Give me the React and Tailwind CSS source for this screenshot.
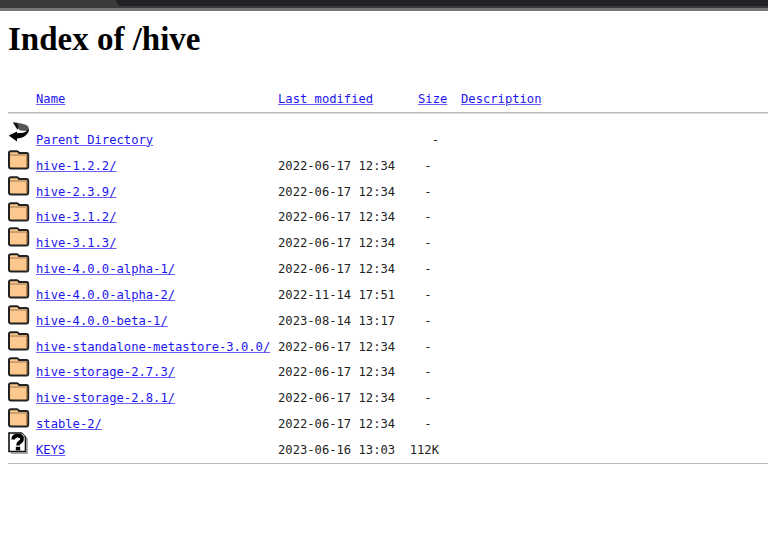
import React from "react";

const mono = "font-['DejaVu_Sans_Mono',monospace] text-[12.17px] leading-[14px]";
const linkCls = "text-[#1c14ee] underline decoration-[#6a60f4]";

const rows = [
  { name: "Parent Directory", date: "", size: "-", icon: "back" },
  { name: "hive-1.2.2/", date: "2022-06-17 12:34", size: "- ", icon: "folder" },
  { name: "hive-2.3.9/", date: "2022-06-17 12:34", size: "- ", icon: "folder" },
  { name: "hive-3.1.2/", date: "2022-06-17 12:34", size: "- ", icon: "folder" },
  { name: "hive-3.1.3/", date: "2022-06-17 12:34", size: "- ", icon: "folder" },
  { name: "hive-4.0.0-alpha-1/", date: "2022-06-17 12:34", size: "- ", icon: "folder" },
  { name: "hive-4.0.0-alpha-2/", date: "2022-11-14 17:51", size: "- ", icon: "folder" },
  { name: "hive-4.0.0-beta-1/", date: "2023-08-14 13:17", size: "- ", icon: "folder" },
  { name: "hive-standalone-metastore-3.0.0/", date: "2022-06-17 12:34", size: "- ", icon: "folder" },
  { name: "hive-storage-2.7.3/", date: "2022-06-17 12:34", size: "- ", icon: "folder" },
  { name: "hive-storage-2.8.1/", date: "2022-06-17 12:34", size: "- ", icon: "folder" },
  { name: "stable-2/", date: "2022-06-17 12:34", size: "- ", icon: "folder" },
  { name: "KEYS", date: "2023-06-16 13:03", size: "112K", icon: "unknown" },
];

const FolderIcon = () => (
  <svg width="22" height="24" viewBox="0 0 22 24" className="block">
    <path
      d="M1 6 V5 Q1 3.2 3 3.2 H9 Q10.5 3.2 11 5 H18.5 Q20.2 5 20.2 7 V18.5 Q20.2 20.4 18.5 20.4 H3 Q1 20.4 1 18.5 Z"
      fill="#fcc88e"
      stroke="#222"
      strokeWidth="2"
    />
    <path d="M2 7 H19" stroke="#9a7650" strokeWidth="1" />
    <path d="M18.7 7.5 V19" stroke="#b07c44" strokeWidth="1" />
  </svg>
);

const BackIcon = () => (
  <svg width="22" height="24" viewBox="0 0 22 24" className="block">
    <path d="M5 0.5 Q14 0.5 20 4 Q21.2 6 20.5 9 L12 8.5 Z" fill="#555" />
    <path d="M5 0.5 L9 1 L10.5 5 L9.5 8 Z" fill="#111" />
    <path
      d="M20.8 6 Q19 11 12 11 L9 11 V9.5 L0.7 13.5 L9 19.5 V16.5 Q17 16 20.5 10 Z"
      fill="#050505"
    />
  </svg>
);

const UnknownIcon = () => (
  <svg width="22" height="24" viewBox="0 0 22 24" className="block">
    <path d="M1 1 H13.5 L17.5 5 V19.5 H1 Z" fill="#fff" stroke="#111" strokeWidth="1.6" />
    <path d="M13.5 1 V5 H17.5" fill="#ccc" stroke="#555" strokeWidth="1" />
    <path d="M19 6 V21 H3" fill="none" stroke="#8a8a8a" strokeWidth="1.4" />
    <path
      d="M5.2 7.5 Q5.2 3.6 9.6 3.6 Q14 3.6 14 7 Q14 9 11.6 10.4 Q10 11.3 10 13.5"
      fill="none"
      stroke="#000"
      strokeWidth="3.7"
    />
    <rect x="7.8" y="14.8" width="4.4" height="3.6" fill="#000" />
  </svg>
);

const icons = { folder: FolderIcon, back: BackIcon, unknown: UnknownIcon };

const Row = ({ row }) => {
  const Icon = icons[row.icon];
  return (
    <div className={`flex h-[25.85px] items-end ${mono}`}>
      <div className="w-[28px] shrink-0 self-start">
        <Icon />
      </div>
      <div className="w-[242px] shrink-0 pb-[1px]">
        <a href="#" className={linkCls}>{row.name}</a>
      </div>
      <div className="w-[124px] shrink-0 pb-[1px] whitespace-pre text-[#222]">{row.date}</div>
      <div className="w-[37px] shrink-0 pb-[1px] whitespace-pre text-right text-[#222]">{row.size}</div>
    </div>
  );
};

export default function App() {
  return (
    <div className="min-h-[546px] bg-white">
      <div className="relative h-[11px] bg-[#3a3a3a] border-b-[3px] border-[#777]">
        <div className="absolute left-[116px] right-0 top-0 h-[6px] rounded-bl-[8px] bg-[#202124]" />
      </div>
      <div className="pl-2">
        <h1 className="pt-[10px] font-['Liberation_Serif',serif] text-[33px] leading-[37px] font-bold text-black">
          Index of /hive
        </h1>
        <div className={`flex mt-[34px] h-[14px] ${mono}`}>
          <div className="w-[28px] shrink-0" />
          <div className="w-[242px] shrink-0"><a href="#" className={linkCls}>Name</a></div>
          <div className="w-[140px] shrink-0"><a href="#" className={linkCls}>Last modified</a></div>
          <div className="w-[43px] shrink-0"><a href="#" className={linkCls}>Size</a></div>
          <div><a href="#" className={linkCls}>Description</a></div>
        </div>
        <div className="mt-[6px] mb-[8px] h-[2px] border-t border-b border-t-[#bbb] border-b-[#ddd]" />
        {rows.map((row) => (
          <Row key={row.name} row={row} />
        ))}
        <div className="mt-[5px] h-[1px] bg-[#bbb]" />
      </div>
    </div>
  );
}
